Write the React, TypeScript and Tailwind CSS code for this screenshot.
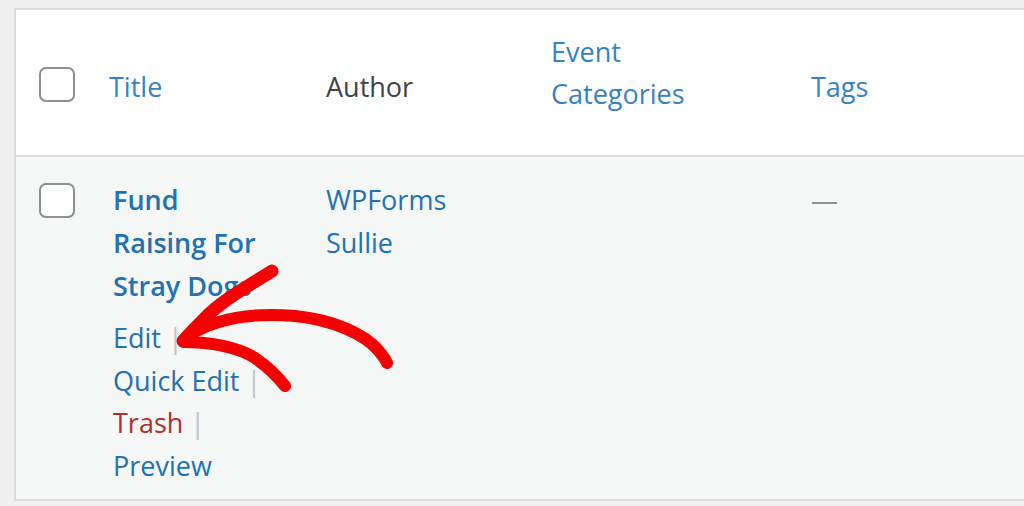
import React from 'react';

function Checkbox() {
  return <div className="w-[36px] h-[35px] rounded-[7px] border-2 border-[#8c8f94] bg-white" />;
}

function Sep() {
  return <span className="text-[#c3c4c7]"> |</span>;
}

// Hand drawn red arrow pointing at the Edit link
function Arrow() {
  return (
    <svg className="absolute left-0 top-0 pointer-events-none" width="1024" height="506" viewBox="0 0 1024 506">
      <g fill="none" stroke="#f40000" strokeLinecap="round" strokeLinejoin="round">
        <path d="M272 271 C250 285 222 300 205 318 C195 328 188 335 183 341" strokeWidth="13" />
        <path d="M186 337 C215 318 250 312 295 316 C335 320 365 335 378 350 C383 356 386 360 387 363" strokeWidth="12" />
        <path d="M184 342 C210 342 238 347 255 358 C268 367 278 377 285 386" strokeWidth="12" />
      </g>
    </svg>
  );
}

export default function App() {
  return (
    <div className="relative w-[1024px] h-[506px] overflow-hidden bg-[#f0f0f1] pl-[14px] pt-[8px] font-['Open_Sans',sans-serif] text-[27px] leading-[43px]">
      <div className="border-l-2 border-t-2 border-b-2 border-[#dcdcde] bg-white">
        {/* header */}
        <div className="flex h-[147px] bg-white border-b-2 border-[#dcdcde]">
          <div className="w-[79px] pl-[23px] pt-[57px]">
            <Checkbox />
          </div>
          <div className="w-[215px] pl-[14px] pt-[55px] text-[#3582c4]">Title</div>
          <div className="w-[220px] pl-[16px] pt-[55px] text-[#3c434a]">Author</div>
          <div className="w-[260px] pl-[21px] pr-[60px] pt-[21px] text-[#3582c4] leading-[42px]">Event Categories</div>
          <div className="flex-1 pl-[21px] pt-[55px] text-[#3582c4]">Tags</div>
        </div>
        {/* row */}
        <div className="flex h-[342px] bg-[#f6f7f7]">
          <div className="w-[79px] pl-[23px] pt-[26px]">
            <Checkbox />
          </div>
          <div className="w-[215px] pl-[18px] pt-[21px]">
            <div className="font-semibold text-[#2271b1]">
              Fund<br />Raising For<br />Stray Dogs
            </div>
            <div className="mt-[10px] text-[#2271b1] leading-[42.5px]">
              <div>Edit<Sep /></div>
              <div>Quick Edit<Sep /></div>
              <div><span className="text-[#b32d2e]">Trash</span><Sep /></div>
              <div>Preview</div>
            </div>
          </div>
          <div className="w-[220px] pl-[16px] pr-[50px] pt-[21px] text-[#2271b1]">WPForms Sullie</div>
          <div className="w-[260px]" />
          <div className="flex-1 pl-[21px] pt-[21px] text-[#8c8f94]">—</div>
        </div>
      </div>
      <Arrow />
    </div>
  );
}
